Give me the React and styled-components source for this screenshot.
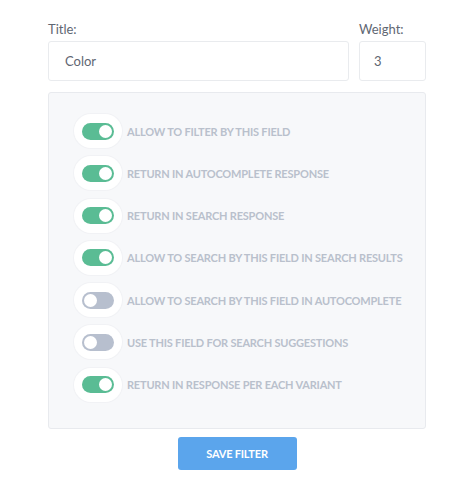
import React, { useState } from "react";
import styled, { createGlobalStyle } from "styled-components";

const GlobalStyle = createGlobalStyle`
  body {
    margin: 0;
    background: #ffffff;
    font-family: "Source Sans Pro", "Lato", "Open Sans", sans-serif;
  }
`;

const OPTIONS = [
  { label: "Allow to filter by this field", on: true },
  { label: "Return in autocomplete response", on: true },
  { label: "Return in search response", on: true },
  { label: "Allow to search by this field in search results", on: true },
  { label: "Allow to search by this field in autocomplete", on: false },
  { label: "Use this field for search suggestions", on: false },
  { label: "Return in response per each variant", on: true },
];

export default function App() {
  const [options, setOptions] = useState(OPTIONS);

  const onToggle = (index) =>
    setOptions((prev) =>
      prev.map((item, i) => (i === index ? { ...item, on: !item.on } : item))
    );

  return (
    <Container>
      <GlobalStyle />
      <div className="fields">
        <Field $grow>
          <Label>Title:</Label>
          <Input defaultValue="Color" />
        </Field>
        <Field>
          <Label>Weight:</Label>
          <Input defaultValue="3" $narrow />
        </Field>
      </div>
      <Panel>
        {options.map((item, index) => (
          <Row key={item.label}>
            <SwitchWrap onClick={() => onToggle(index)}>
              <Track $on={item.on}>
                <Knob $on={item.on} />
              </Track>
            </SwitchWrap>
            <RowLabel>{item.label}</RowLabel>
          </Row>
        ))}
      </Panel>
      <div className="actions">
        <SaveButton>Save filter</SaveButton>
      </div>
    </Container>
  );
}

const Container = styled.div`
  width: 378px;
  padding: 21px 0 0 48px;

  .fields {
    display: flex;
    gap: 10px;
  }
  .actions {
    display: flex;
    justify-content: center;
    margin-top: 8px;
  }
`;

const Field = styled.div`
  display: flex;
  flex-direction: column;
  flex: ${({ $grow }) => ($grow ? "1" : "0 0 67px")};
`;

const Label = styled.label`
  font-size: 13px;
  line-height: 16px;
  color: #5f6773;
  margin-bottom: 4px;
`;

const Input = styled.input`
  box-sizing: border-box;
  height: 40px;
  width: 100%;
  border: 1px solid #e9ebee;
  border-radius: 3px;
  padding: 0 ${({ $narrow }) => ($narrow ? "14px" : "16px")};
  font-family: inherit;
  font-size: 13px;
  color: #5f6672;
  background: #fff;
  outline: none;
`;

const Panel = styled.div`
  box-sizing: border-box;
  margin-top: 11px;
  background: #f7f8fa;
  border: 1px solid #e8eaee;
  border-radius: 3px;
  padding: 21px 25px 26px;
  display: flex;
  flex-direction: column;
  gap: 8.3px;
`;

const Row = styled.div`
  display: flex;
  align-items: center;
  gap: 5px;
`;

const SwitchWrap = styled.div`
  box-sizing: border-box;
  flex: 0 0 48px;
  height: 34px;
  border-radius: 17px;
  background: #fff;
  display: flex;
  align-items: center;
  justify-content: center;
  cursor: pointer;
  box-shadow: 0 0 0 1px #f1f2f5;
`;

const Track = styled.div`
  box-sizing: border-box;
  width: 32px;
  height: 17px;
  border-radius: 9px;
  padding: 2px;
  display: flex;
  justify-content: ${({ $on }) => ($on ? "flex-end" : "flex-start")};
  background: ${({ $on }) => ($on ? "#5abc94" : "#b7bfce")};
`;

const Knob = styled.span`
  width: 13px;
  height: 13px;
  border-radius: 50%;
  background: #fff;
`;

const RowLabel = styled.span`
  font-size: 11px;
  font-weight: 700;
  text-transform: uppercase;
  letter-spacing: -0.2px;
  white-space: nowrap;
  color: #b9c0cc;
`;

const SaveButton = styled.button`
  width: 119px;
  height: 33px;
  border: none;
  border-radius: 3px;
  background: #5ba5ec;
  color: #fff;
  font-family: inherit;
  font-size: 11px;
  font-weight: 700;
  text-transform: uppercase;
  letter-spacing: -0.2px;
  cursor: pointer;
`;
